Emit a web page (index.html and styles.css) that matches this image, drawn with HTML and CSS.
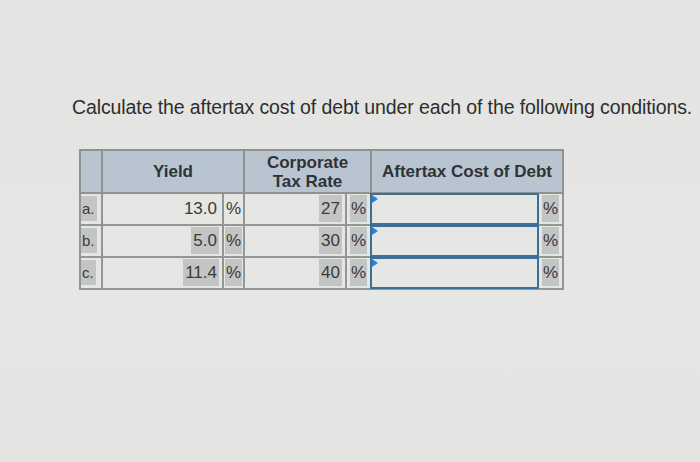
FILE: index.html
```html
<!DOCTYPE html>
<html>
<head>
<meta charset="utf-8">
<link rel="stylesheet" href="styles.css">
</head>
<body>
<div class="page">
  <p class="prompt">Calculate the aftertax cost of debt under each of the following conditions.</p>
  <table class="grid">
    <colgroup>
      <col class="c-lab"><col class="c-yv"><col class="c-yp"><col class="c-tv"><col class="c-tp"><col class="c-in"><col class="c-ip">
    </colgroup>
    <thead>
      <tr>
        <th></th>
        <th colspan="2">Yield</th>
        <th colspan="2" class="two">Corporate<br>Tax Rate</th>
        <th colspan="2">Aftertax Cost of Debt</th>
      </tr>
    </thead>
    <tbody>
      <tr>
        <td class="lab"><span class="hl">a.</span></td>
        <td class="num"><span>13.0</span></td>
        <td class="pct"><span>%</span></td>
        <td class="num"><span class="hl">27</span></td>
        <td class="pct"><span class="hl">%</span></td>
        <td class="inp"><div class="box"><i class="tri"></i></div></td>
        <td class="pct end"><span class="hl">%</span></td>
      </tr>
      <tr>
        <td class="lab"><span class="hl">b.</span></td>
        <td class="num"><span class="hl">5.0</span></td>
        <td class="pct"><span class="hl">%</span></td>
        <td class="num"><span class="hl">30</span></td>
        <td class="pct"><span class="hl">%</span></td>
        <td class="inp"><div class="box"><i class="tri"></i></div></td>
        <td class="pct end"><span class="hl">%</span></td>
      </tr>
      <tr>
        <td class="lab"><span class="hl">c.</span></td>
        <td class="num"><span class="hl">11.4</span></td>
        <td class="pct"><span class="hl">%</span></td>
        <td class="num"><span class="hl">40</span></td>
        <td class="pct"><span class="hl">%</span></td>
        <td class="inp"><div class="box"><i class="tri"></i></div></td>
        <td class="pct end"><span class="hl">%</span></td>
      </tr>
    </tbody>
  </table>
</div>
</body>
</html>
```
FILE: styles.css
```css
html, body {
  margin: 0;
  padding: 0;
}
body {
  width: 700px;
  height: 462px;
  overflow: hidden;
  background: linear-gradient(180deg, #e3e4e1 0%, #e6e7e4 60%, #e4e5e2 100%);
  font-family: "Liberation Sans", Arial, sans-serif;
  color: #333;
}
.page {
  padding: 95px 0 0 72px;
}
.prompt {
  margin: 0;
  font-size: 19.5px;
  line-height: 24px;
  color: #2e2e2e;
  letter-spacing: -0.1px;
}
.grid {
  margin: 30px 0 0 7px;
  border-collapse: collapse;
  table-layout: fixed;
  width: 483px;
  border: 2px solid #8f928f;
}
.c-lab { width: 22px; }
.c-yv { width: 121px; }
.c-yp { width: 21px; }
.c-tv { width: 102px; }
.c-tp { width: 25px; }
.c-in { width: 167px; }
.c-ip { width: 25px; }
.grid th {
  background: #b8c5d0;
  height: 41px;
  padding: 0;
  border: 2px solid #8f928f;
  font-size: 17px;
  font-weight: bold;
  color: #2f3236;
  line-height: 19px;
  text-align: center;
}
.grid td {
  height: 30px;
  padding: 0;
  border: 2px solid #939693;
  font-size: 17px;
  color: #3a3a3a;
  vertical-align: middle;
}
.lab {
  text-align: left;
}
.lab .hl {
  padding: 4px 2px 4px 1px;
  font-size: 15px;
}
.num {
  text-align: right;
  padding-right: 3px !important;
}
.num span {
  padding: 4px 2px;
}
.pct {
  text-align: center;
}
.pct span {
  padding: 4px 1px;
}
.hl {
  background: #c3c5c4;
}
.inp {
  position: relative;
}
.box {
  position: relative;
  height: 28px;
  margin: -2px;
  border: 2px solid #3c6f98;
}
.tri {
  position: absolute;
  left: 0;
  top: 0;
  width: 0;
  height: 0;
  border-top: 4px solid transparent;
  border-bottom: 4px solid transparent;
  border-left: 6px solid #2f7fd0;
}
```
